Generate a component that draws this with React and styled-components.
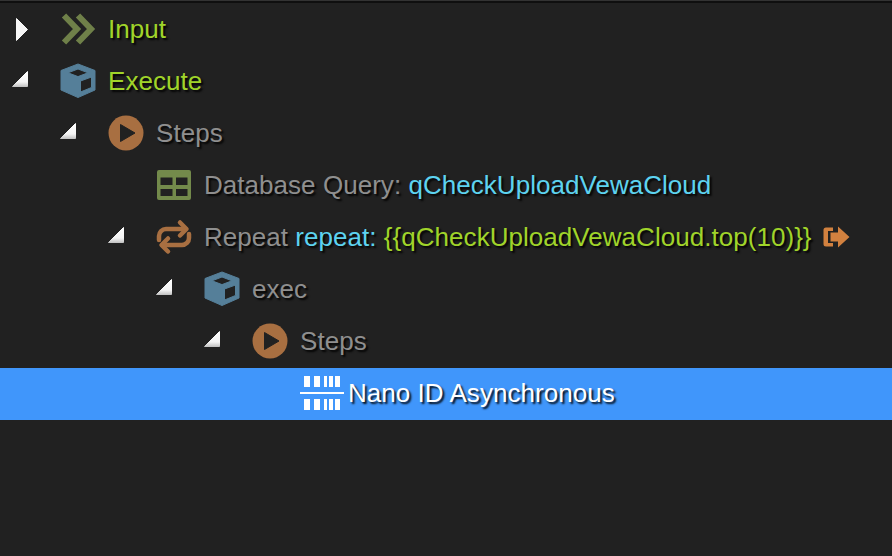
import React from "react";
import styled, { createGlobalStyle } from "styled-components";

const Global = createGlobalStyle`
  html, body { margin: 0; padding: 0; background: #212121; }
  body { font-family: "Liberation Sans", Arial, sans-serif; }
`;

const Page = styled.div`
  width: 892px;
  height: 556px;
  overflow: hidden;
  background: #212121;
  border-top: 1px solid #333333;
  box-sizing: border-box;
  padding-top: 3px;
  &::before {
    content: "";
    display: block;
    height: 2px;
    margin-top: -3px;
    margin-bottom: 1px;
    background: #0f0f0f;
  }
`;

const Row = styled.div`
  height: 52px;
  box-sizing: border-box;
  padding-bottom: 2px;
  display: flex;
  align-items: center;
  padding-left: ${p => p.$level * 48}px;
  background: ${p => (p.$selected ? "#4096fb" : "transparent")};
`;

const Toggle = styled.div`
  width: 60px;
  height: 50px;
  flex: none;
  display: flex;
  align-items: center;
`;

const IconBox = styled.div`
  width: 36px;
  height: 36px;
  flex: none;
  margin-right: 12px;
  display: flex;
  align-items: center;
  justify-content: flex-start;
  svg { flex: none; }
`;

const Label = styled.span`
  font-size: 26px;
  letter-spacing: 0.04px;
  white-space: nowrap;
  color: ${p => p.$color};
  text-shadow: 2px 2px 2px rgba(0, 0, 0, 0.9);
`;

const Inline = styled.span`
  color: ${p => p.$color};
`;

const Exit = styled.svg`
  width: 28px;
  height: 22px;
  margin-left: 11px;
  flex: none;
`;

const Shade = () => (
  <defs>
    <linearGradient id="tri" x1="0" y1="0" x2="0" y2="1">
      <stop offset="0" stopColor="#ffffff" />
      <stop offset="0.7" stopColor="#f4f4f4" />
      <stop offset="1" stopColor="#c4c4c4" />
    </linearGradient>
  </defs>
);

const Expanded = () => (
  <svg width="60" height="50" viewBox="0 0 60 50">
    <Shade />
    <path d="M27.500 15.500V30.500H12.500Z" fill="url(#tri)" stroke="url(#tri)" strokeWidth="1" strokeLinejoin="round" />
  </svg>
);
const Collapsed = () => (
  <svg width="60" height="50" viewBox="0 0 60 50">
    <Shade />
    <path d="M16.500 14.500V36.500L27.500 25.500Z" fill="#f6f6f6" stroke="#f6f6f6" strokeWidth="1" strokeLinejoin="round" />
  </svg>
);

const Chevrons = () => (
  <svg width="36" height="36" viewBox="0 0 36 36" fill="none" stroke="#6f8049" strokeWidth="6" strokeLinejoin="miter" strokeLinecap="butt">
    <path d="M4 4.500L17 18L4 31.500" />
    <path d="M18 4.500L31 18L18 31.500" />
  </svg>
);
const Cube = () => (
  <svg width="36" height="36" viewBox="0 0 36 36">
    <path fillRule="evenodd" strokeLinejoin="round" stroke="#557f99" strokeWidth="1" d="M18 1L35 7.500V27L18 34.500L1 27V7.500Z M18 6L8 9.800L18 13.600L28 9.800Z M20.500 18V29L31.500 24.500V14Z" fill="#557f99" />
  </svg>
);
const Play = () => (
  <svg width="36" height="36" viewBox="0 0 36 36">
    <circle cx="18" cy="18" r="17.500" fill="#a86f41" />
    <path d="M12.500 9.500L27 18L12.500 26.500Z" fill="#212121" stroke="#212121" strokeWidth="1" strokeLinejoin="round" />
  </svg>
);
const Table = () => (
  <svg width="36" height="36" viewBox="0 0 36 36">
    <path fillRule="evenodd" d="M3 3H33A2 2 0 0 1 35 5V31A2 2 0 0 1 33 33H3A2 2 0 0 1 1 31V5A2 2 0 0 1 3 3Z M4.500 10.500V18H16.500V10.500Z M20 10.500V18H31.500V10.500Z M4.500 22V29H16.500V22Z M20 22V29H31.500V22Z" fill="#738a4b" />
  </svg>
);
const Repeat = () => (
  <svg width="36" height="36" viewBox="0 0 36 36" fill="none" stroke="#a86f41" strokeWidth="4.500" strokeLinecap="round" strokeLinejoin="round">
    <path d="M3 21V17A7 7 0 0 1 10 10H29" />
    <path d="M24 3.500L30.500 10L24 16.500" />
    <path d="M33 15V19A7 7 0 0 1 26 26H7" />
    <path d="M12 19.500L5.500 26L12 32.500" />
  </svg>
);
const Barcode = () => (
  <svg width="44" height="36" viewBox="0 0 44 36" fill="#fff">
    <path d="M4 1h6v11H4z M14 1h6v11h-6z M24 1h3v11h-3z M29 1h4v11h-4z M35 1h5v11h-5z" />
    <path d="M0 17h44v2H0z" />
    <path d="M4 24h6v11H4z M14 24h6v11h-6z M24 24h3v11h-3z M29 24h4v11h-4z M35 24h5v11h-5z" />
  </svg>
);

const GRAY = "#8f8f8f";
const GREEN = "#a0d42a";
const CYAN = "#5dd3f0";

export default function App() {
  return (
    <>
      <Global />
      <Page>
        <Row $level={0}>
          <Toggle><Collapsed /></Toggle>
          <IconBox><Chevrons /></IconBox>
          <Label $color={GREEN}>Input</Label>
        </Row>
        <Row $level={0}>
          <Toggle><Expanded /></Toggle>
          <IconBox><Cube /></IconBox>
          <Label $color={GREEN}>Execute</Label>
        </Row>
        <Row $level={1}>
          <Toggle><Expanded /></Toggle>
          <IconBox><Play /></IconBox>
          <Label $color={GRAY}>Steps</Label>
        </Row>
        <Row $level={2}>
          <Toggle />
          <IconBox><Table /></IconBox>
          <Label $color={GRAY}>
            Database Query: <Inline $color={CYAN}>qCheckUploadVewaCloud</Inline>
          </Label>
        </Row>
        <Row $level={2}>
          <Toggle><Expanded /></Toggle>
          <IconBox><Repeat /></IconBox>
          <Label $color={GRAY}>
            Repeat <Inline $color={CYAN}>repeat:</Inline>{" "}
            <Inline $color={GREEN}>{"{{qCheckUploadVewaCloud.top(10)}}"}</Inline>
          </Label>
          <Exit viewBox="0 0 28 22">
            <path fillRule="evenodd" d="M3 1.500H10V5H5V17H10V20.500H3A2.500 2.500 0 0 1 0.500 18V4A2.500 2.500 0 0 1 3 1.500Z M15 0.500L26.500 11L15 21.500V15.500H7.500V6.500H15Z" fill="#d2813f" />
          </Exit>
        </Row>
        <Row $level={3}>
          <Toggle><Expanded /></Toggle>
          <IconBox><Cube /></IconBox>
          <Label $color={GRAY}>exec</Label>
        </Row>
        <Row $level={4}>
          <Toggle><Expanded /></Toggle>
          <IconBox><Play /></IconBox>
          <Label $color={GRAY}>Steps</Label>
        </Row>
        <Row $level={5} $selected>
          <Toggle />
          <IconBox><Barcode /></IconBox>
          <Label $color="#ffffff">Nano ID Asynchronous</Label>
        </Row>
      </Page>
    </>
  );
}
